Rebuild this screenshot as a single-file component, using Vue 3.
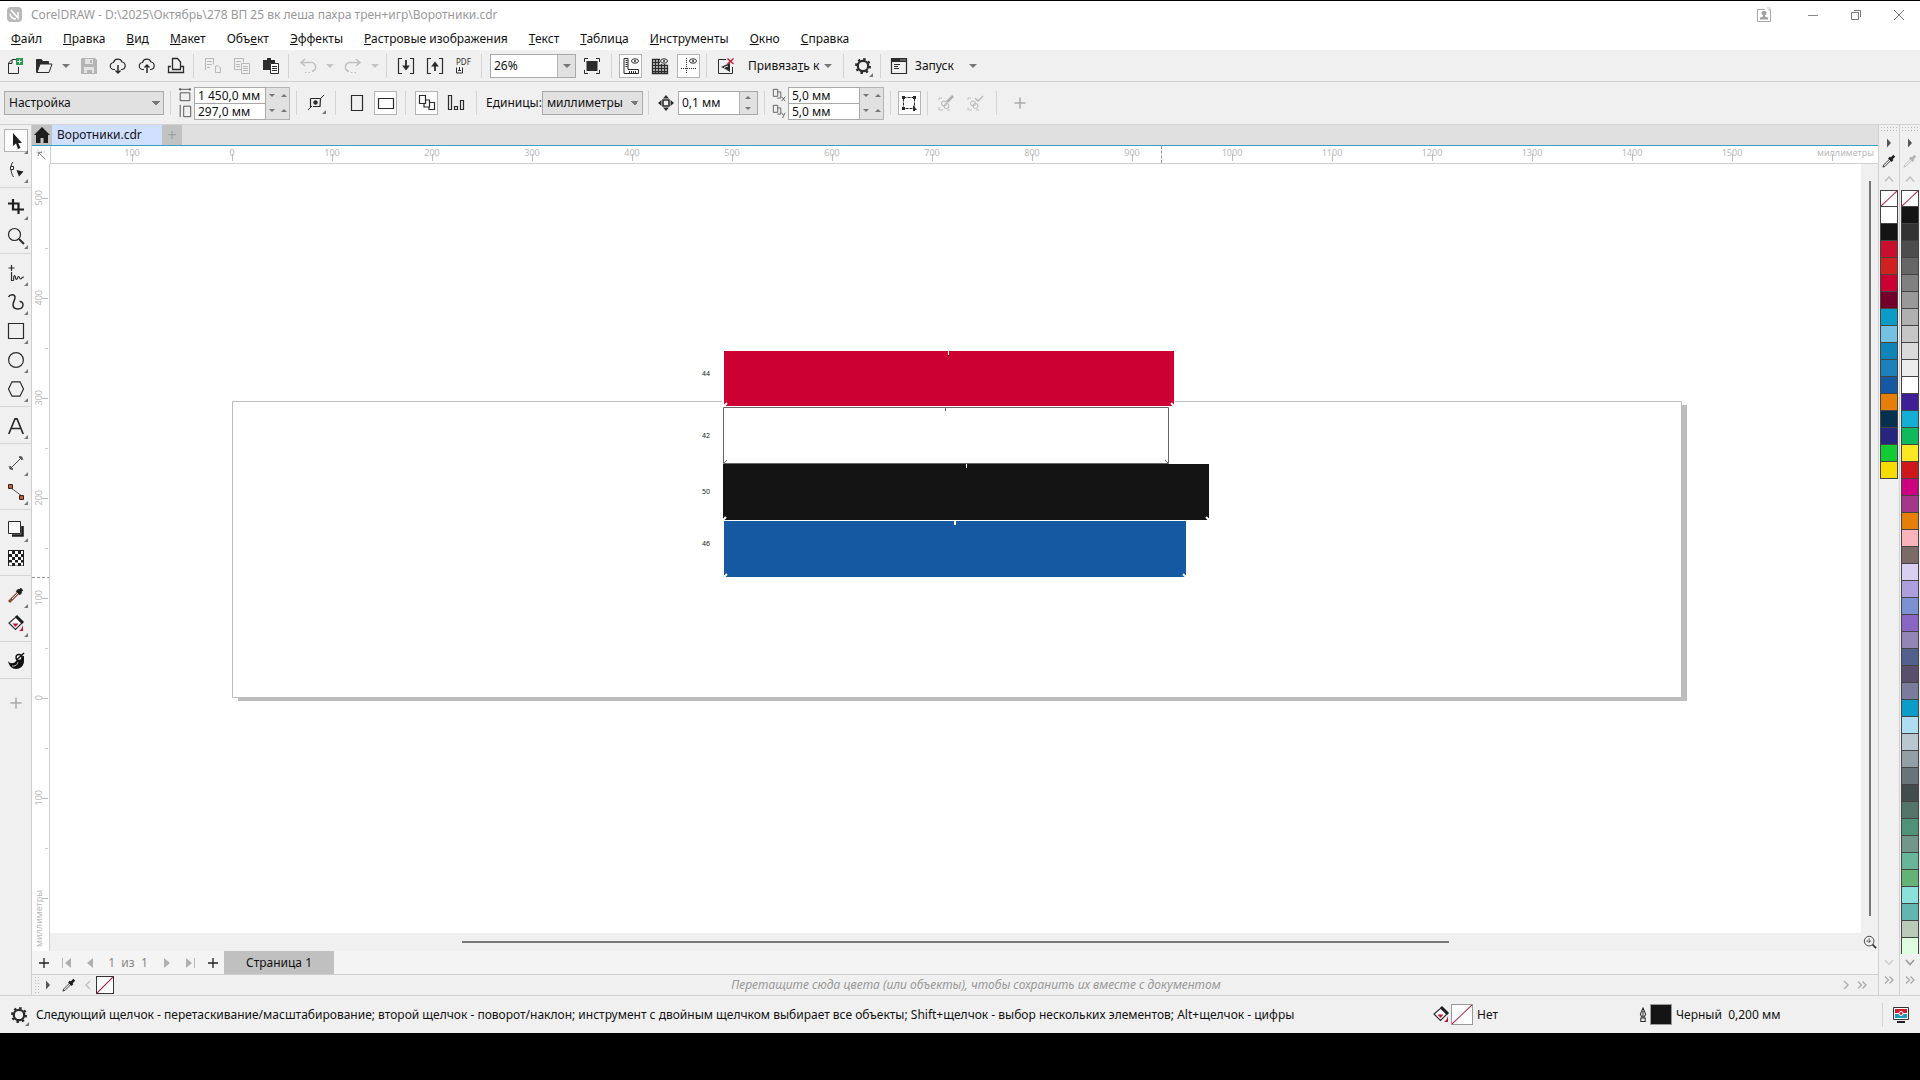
<script setup>
import { h } from 'vue'

const glyphs = {
  logo: '<rect x="0" y="0" width="15" height="15" rx="4" fill="#b9b9b9"/><path d="M4 3l7 8V5M3 7c1 4 4 5 6 5" fill="none" stroke="#fff" stroke-width="1.5"/>',
  new: '<path d="M9 1.5H5L1.5 5v10.5h10V9M5 2v3.5H1.5" stroke="#2b2b2b"/><path d="M9 0h7v7H9z" fill="#2a9a50"/><path d="M12.5 1.5v4M10.5 3.5h4" stroke="#fff"/>',
  open: '<path d="M.5 14.5V1.5h5l1 2h6V6" stroke="#2b2b2b" fill="#2b2b2b"/><path d="M1 14.5L4 6h12l-3 8.5z" fill="#f0f0f0" stroke="#2b2b2b"/>',
  save: '<path d="M1 0h13l2 2v14H0V1z" fill="#b4b4b4"/><path d="M4 1h8v5H4zM3 9h10v6H3z" fill="#e4e4e4"/><path d="M9 2h2v3H9zM6 12h5v3H6z" fill="#b4b4b4"/>',
  clouddown: '<path d="M5 11.5H4a3.5 3.5 0 0 1-.5-7A4.5 4.5 0 0 1 12 4a3.8 3.8 0 0 1 0 7.5h-1" stroke="#2b2b2b" stroke-width="1.2"/><path d="M8 7v8M5.5 12.5L8 15l2.5-2.5" stroke="#2b2b2b" stroke-width="1.5"/>',
  cloudup: '<path d="M5 11.5H4a3.5 3.5 0 0 1-.5-7A4.5 4.5 0 0 1 12 4a3.8 3.8 0 0 1 0 7.5h-1" stroke="#2b2b2b" stroke-width="1.2"/><path d="M8 15V7M5.5 9.5L8 7l2.5 2.5" stroke="#2b2b2b" stroke-width="1.5"/>',
  print: '<path d="M4.5 11V.5h5L12.5 4v7M3 8.5H.5v6h15v-6H13M4 11.5h9" stroke="#2b2b2b" stroke-width="1.3"/>',
  cut: '<path d="M.5 12V.5h8v6M2 3.5h5M2 6.5h5M2 9.5h3M10.5 8v6.5h5V10l-2-2z" stroke="#b8b8b8"/>',
  copy: '<path d="M7 11.5H.5V.5h9v4M2 3.5h5M2 6.5h4M2 8.5h4M7.5 5.5h8v10h-8zM9 8.5h5M9 10.5h5M9 12.5h5" stroke="#b8b8b8"/>',
  paste: '<path d="M0 2h4V0h4v2h4v3H7v7H0z" fill="#2b2b2b"/><path d="M7.5 5.5h8v10h-8zM9 8.5h5M9 10.5h5M9 12.5h5" stroke="#2b2b2b" fill="#fff"/>',
  undo: '<path d="M5 1L1 4.5 5 8M1 4.5h9a4.5 4.5 0 0 1 2 9" stroke="#c0c0c0" stroke-width="1.5"/><path d="M10 14.5H3" stroke="#c0c0c0" stroke-dasharray="1.5 2"/>',
  redo: '<path d="M11 1l4 3.5L11 8M15 4.5H6a4.5 4.5 0 0 0-2 9" stroke="#c0c0c0" stroke-width="1.5"/><path d="M6 14.5h7" stroke="#c0c0c0" stroke-dasharray="1.5 2"/>',
  import: '<path d="M4 .5H.5v15H4M12 .5h3.5v15H12" stroke="#2b2b2b" stroke-width="1.2"/><path d="M8 2v9M6 8.5L8 11l2-2.5z" stroke="#2b2b2b" stroke-width="1.8"/>',
  export: '<path d="M4 .5H.5v15H4M12 .5h3.5v15H12" stroke="#2b2b2b" stroke-width="1.2"/><path d="M8 13V5M6 7.5L8 5l2 2.5z" stroke="#2b2b2b" stroke-width="1.8"/>',
  pdf: '<text x="0" y="7" font-size="8" fill="#2b2b2b">PDF</text><path d="M.5 9.5V15h6V9.5M2 12.5h3M3.5 9v4" stroke="#2b2b2b"/>',
  full: '<path d="M.5 4V.5H4M12 .5h3.5V4M15.5 12v3.5H12M4 15.5H.5V12" stroke="#2b2b2b"/><path d="M2.5 3h11v10h-11z" fill="#2b2b2b"/>',
  rulers: '<path d="M1 .5h4v11h10.5v4H1zM2.5 2.5h2M2.5 4.5h2M2.5 6.5h2M2.5 8.5h2M6.5 13v2M8.5 13v2M10.5 13v2M12.5 13v2" stroke="#2b2b2b"/><ellipse cx="12" cy="3" rx="3.5" ry="2.2" stroke="#2b2b2b"/><circle cx="12" cy="3" r="1" fill="#2b2b2b"/>',
  grid: '<path d="M.5 1v14.5h15V7M3.5 1v15M6.5 1v15M9.5 6v10M12.5 6v10M0 1.5h8M0 4.5h8M0 7.5h16M0 10.5h16M0 13.5h16" stroke="#2b2b2b" stroke-width="1.3"/><ellipse cx="12" cy="3" rx="3.5" ry="2.2" stroke="#2b2b2b"/><circle cx="12" cy="3" r="1" fill="#2b2b2b"/>',
  guides: '<path d="M5.5 0v16M0 10.5h16" stroke="#2b2b2b" stroke-dasharray="1 1"/><ellipse cx="12" cy="3" rx="3.5" ry="2.2" stroke="#2b2b2b"/><circle cx="12" cy="3" r="1" fill="#2b2b2b"/>',
  snapoff: '<path d="M8 1.5H.5v14h14V9" stroke="#2b2b2b"/><path d="M12 5L3 9l3.5 1.5L12 14z" fill="#2b2b2b"/><path d="M6 9.5L10 8" stroke="#eee"/><path d="M9.5.5l6 5.5M15.5.5l-6 5.5" stroke="#c8102e" stroke-width="1.3"/>',
  gear: '<circle cx="8" cy="8" r="5.2" stroke="#2b2b2b" stroke-width="2.2"/><circle cx="8" cy="8" r="7" stroke="#2b2b2b" stroke-width="2" stroke-dasharray="2.5 3"/>',
  launch: '<path d="M.5.5h15v15H.5z" stroke="#2b2b2b" stroke-width="1.2"/><path d="M0 0h16v4H0z" fill="#2b2b2b"/><path d="M9.5 2h1M11.5 2h1M13.5 2h1" stroke="#fff"/><path d="M3 6.5h6M3 8.5h4M3 10.5h5" stroke="#2b2b2b"/>',
  node: '<path d="M2.5 3.5V12M2.5 3.5h10l-.5 8H5" stroke="#2b2b2b" stroke-width="1.2"/><path d="M0 15l4-4M12 4l4-4" stroke="#2b2b2b"/><circle cx="7.5" cy="7.5" r="2.2" fill="#2b2b2b"/>',
  portrait: '<path d="M2.5.5h11v15h-11z" stroke="#2b2b2b" stroke-width="1.2"/>',
  landscape: '<path d="M.5 3.5h15v10H.5z" stroke="#2b2b2b" stroke-width="1.2"/>',
  pages: '<path d="M.5.5h6v8h-6zM5 9v3h5.5V5H7M10 12.5v2h5.5v-7H11" stroke="#2b2b2b" stroke-width="1.2"/>',
  bars: '<path d="M.5.5h3v14h-3zM6.5 11.5h3v3h-3zM12.5 5.5h3v9h-3z" stroke="#2b2b2b" stroke-width="1.2"/>',
  nudge: '<path d="M8 0l3 3.5H5zM8 16l3-3.5H5zM0 8l3.5-3v6zM16 8l-3.5-3v6z" fill="#2b2b2b"/><path d="M5 5h6v6H5z" stroke="#2b2b2b" stroke-width="1.6"/>',
  bound: '<path d="M2.5 2.5h11v11h-11z" stroke="#2b2b2b" stroke-dasharray="3 1"/><path d="M1 1h3v3H1zM12 1h3v3h-3zM1 12h3v3H1zM12 10l4 5h-2v1h-2z" fill="#2b2b2b"/>',
  editoff: '<path d="M1 5V3h3M1 12v3h4M9 15h3" stroke="#bdbdbd"/><circle cx="6" cy="8.5" r="2.5" stroke="#b4b4b4"/><circle cx="8.5" cy="11" r="2.5" stroke="#b4b4b4"/><path d="M9 7l6-6" stroke="#adadad" stroke-width="2.5"/>',
  editdone: '<path d="M1 5V3h3M1 12v3h4M9 15h3" stroke="#c4c4c4"/><circle cx="6" cy="8.5" r="2.5" stroke="#b8b8b8"/><circle cx="8.5" cy="11" r="2.5" stroke="#b8b8b8"/><path d="M8 3l3 3 5-5" stroke="#bdbdbd" stroke-width="1.6"/>',
  plus: '<path d="M8 2.5v11M2.5 8h11" stroke="#a9a9a9" stroke-width="1.5"/>',
  home: '<path d="M8 0l8 8h-2v8H9.5v-5h-3v5H2V8H0z" fill="#1e1e1e"/>',
  pick: '<path d="M5 0v13l3-2.5L10 16l2.5-1-2.3-5H14z" fill="#1e1e1e"/>',
  shape: '<path d="M5 0C2 3 2.5 11 5.5 15" stroke="#2b2b2b"/><path d="M2.5 4.5h3v3h-3z" fill="#fff" stroke="#2b2b2b"/><path d="M8.5 8l7 1.5-4.5 5z" fill="#1e1e1e"/>',
  crop: '<path d="M5 0v10.5h5M0 4.5h4M6 4.5h4.5V15M10 10.5h6" stroke="#1e1e1e" stroke-width="2.2"/>',
  zoom: '<circle cx="6.5" cy="6.5" r="6" stroke="#2b2b2b" stroke-width="1.2"/><path d="M11 11l5 5" stroke="#2b2b2b" stroke-width="2"/>',
  free: '<path d="M3.5 0v6M.5 3h6M3.5 7v8.5H5c1.5 0 0-5 1.5-5s.5 4 2 4 .5-3 2-3 .5 2.5 2 2.5 1-2 3.5-2" stroke="#2b2b2b" stroke-width="1.2"/>',
  curve: '<path d="M.5 3C2 0 7 0 7 3.5 7 6 5 8 5 11c0 5 9.5 5.5 10 0 0-2.5-2-4-3.5-3.5" stroke="#2b2b2b" stroke-width="1.5"/>',
  rect: '<path d="M.5.5h15v15H.5z" stroke="#2b2b2b" stroke-width="1.2"/>',
  ellipse: '<circle cx="8" cy="8" r="7.4" stroke="#2b2b2b" stroke-width="1.2"/>',
  poly: '<path d="M4 .8h8L15.5 8 12 15.2H4L.5 8z" stroke="#2b2b2b" stroke-width="1.2"/>',
  text: '<path d="M.8 16L7 .8h2L15.2 16M3.3 10.5h9.4" stroke="#2b2b2b" stroke-width="1.7"/>',
  dim: '<path d="M2 14L14 2M1 11.5L4.5 15M11.5 1L15 4.5M2 11v3h3zM14 5V2h-3z" stroke="#444"/>',
  conn: '<path d="M3 4l11 8" stroke="#555"/><path d="M.5.5h4v4h-4zM11.5 11.5h4v4h-4z" fill="#c2582c" stroke="#3a2a22"/>',
  shadow: '<path d="M14.5 5v9.5H4" stroke="#1e1e1e" stroke-width="2.6"/><path d="M.5.5h12v12H.5z" fill="#fafafa" stroke="#2b2b2b"/>',
  check: '<path d="M0 0h16v16H0z" fill="#1e1e1e"/><path d="M1 2.5h14M1 8.5h14M1 14h14" stroke="#fff" stroke-width="3" stroke-dasharray="3 3"/><path d="M4 5.5h11M4 11.5h11" stroke="#fff" stroke-width="3" stroke-dasharray="3 3"/>',
  drop: '<path d="M1 15l9-9" stroke="#8a4a34" stroke-width="3"/><path d="M4 12l6-6" stroke="#eee"/><path d="M9 3l4 4M11 5l3-3" stroke="#1e1e1e" stroke-width="3.5"/>',
  fill: '<path d="M8 1l6 6-6.5 6.5L1 7z" stroke="#2b2b2b" fill="#fff" stroke-width="1.2"/><path d="M8 0l7 7" stroke="#1e1e1e" stroke-width="3"/><path d="M4.5 7.5h6L7.5 11z" fill="#c8102e"/><path d="M15 9v6h-4c2-1 3-3 4-6z" fill="#c8102e"/>',
  brush: '<path d="M0 8c2 3 6 3 8 0 2-2 4-5 8-5v5c0 5-4 8-8 8s-7-3-8-8z" fill="#111"/><circle cx="11" cy="4.5" r="3" fill="#fff" stroke="#111" stroke-width="1.4"/><path d="M9 6.5L16 0" stroke="#111" stroke-width="1.5"/><path d="M4 13c5 1 6-4 6-4" stroke="#eee" stroke-width=".8"/>',
  pen: '<path d="M8 0l3 7-1.5 3h-3L5 7zM8 3v6M5.5 11.5h5v4h-5z" stroke="#2b2b2b" stroke-width="1.2"/>',
  dark: '<path d="M1 15l1-2.5 7-7 1.5 1.5-7 7z" fill="#eee" stroke="#2b2b2b"/><path d="M8 4l4 4M10.5 5.5L14 2" stroke="#1e1e1e" stroke-width="3"/>',
  light: '<path d="M1 15l1-2.5 7-7 1.5 1.5-7 7z" fill="#eee" stroke="#bbb"/><path d="M8 4l4 4M10.5 5.5L14 2" stroke="#b4b4b4" stroke-width="3"/>',
  user: '<path d="M13 2.5h1.5v12H1.5v-12H9" stroke="#a9a9a9"/><path d="M8 4a2 2 0 0 1 1 4l.5 2 2.5.5v2H4v-2l2.5-.5L7 8a2 2 0 0 1 1-4z" fill="#a0a0a0"/><path d="M11 1h4M12 3h3" stroke="#c9c9c9"/>',
  min: '<path d="M3 8.5h10" stroke="#8a8a8a"/>',
  max: '<path d="M3.5 5.5h7v7h-7zM6 3.5h6.5V10" stroke="#777"/>',
  close: '<path d="M3 3l10 10M13 3L3 13" stroke="#777"/>',
  pagew: '<path d="M2.5 5.5h11v9h-11zM1 1.5h14M2.5 0v3M13.5 0v3" stroke="#444"/>',
  pageh: '<path d="M6.5 2.5h8v12h-8zM2.5 1v14" stroke="#444"/>',
  dupx: '<path d="M1.5 1.5h5v8h-5zM6 4.5h4v7H6" stroke="#555"/><path d="M11 10l4 5M15 10l-4 5" stroke="#555"/>',
  dupy: '<path d="M1.5 1.5h5v8h-5zM6 4.5h4v7H6" stroke="#555"/><path d="M11 10l2 3M15 10l-3 6" stroke="#555"/>',
  origin: '<path d="M4.5 2v12M2 4.5h12" stroke="#999" stroke-dasharray="1 2"/><path d="M5 5l8 8M5 9V5h4" stroke="#777"/>',
  nav: '<circle cx="7" cy="7" r="5.5" stroke="#333"/><path d="M7 4v6M4 7h6" stroke="#555" stroke-width="1.2" stroke-dasharray="2 1"/><path d="M11 11l4 4" stroke="#333" stroke-width="2"/>',
  monitor: '<path d="M.5.5h15v12H.5z" fill="#fff" stroke="#333"/><path d="M2 2h12v4H2z" fill="#d0202e"/><path d="M2 7h12v4H2z" fill="#1d9cc0"/><circle cx="8" cy="6.5" r="2" stroke="#fff" fill="#d0202e"/><path d="M4 15h8" stroke="#222" stroke-width="2"/>',
  first: '<path d="M3.5 3v10" stroke="#b8b8b8"/><path d="M12 3v10L6 8z" fill="#b0b0b0"/>',
  prev: '<path d="M11 3v10L5 8z" fill="#b0b0b0"/>',
  next: '<path d="M5 3v10l6-5z" fill="#b0b0b0"/>',
  last: '<path d="M12.5 3v10" stroke="#b8b8b8"/><path d="M4 3v10l6-5z" fill="#b0b0b0"/>',
  add: '<path d="M8 3v10M3 8h10" stroke="#222" stroke-width="1.3"/>',
  fly: '<path d="M6 3.5v9l4-4.5z" fill="#555"/>',
  up: '<path d="M4 10.5L8 6l4 4.5" stroke="#c2c2c2" stroke-width="1.6"/>',
  down: '<path d="M4 6l4 4.5L12 6" stroke="#d0d0d0" stroke-width="1.6"/>',
  downdark: '<path d="M4 6l4 4.5L12 6" stroke="#999" stroke-width="1.6"/>',
  left: '<path d="M10 4L6 8l4 4" stroke="#c4c4c4" stroke-width="1.6"/>',
  right: '<path d="M6 4l4 4-4 4" stroke="#b4b4b4" stroke-width="1.6"/>',
  more: '<path d="M4 4.5L7.5 8 4 11.5M8.5 4.5L12 8l-3.5 3.5" stroke="#a9a9a9" stroke-width="1.3"/>',
}
const Icon = (props) => h('svg', { class: 'icon', width: props.size || 16, height: props.size || 16, viewBox: '0 0 16 16', fill: 'none', 'aria-hidden': 'true', innerHTML: glyphs[props.name] })
Icon.props = ['name', 'size']

const menus = [
  ['', 'Ф', 'айл'], ['', 'П', 'равка'], ['', 'В', 'ид'], ['', 'М', 'акет'], ['Объ', 'е', 'кт'], ['', 'Э', 'ффекты'],
  ['', 'Р', 'астровые изображения'], ['', 'Т', 'екст'], ['', 'Т', 'аблица'], ['', 'И', 'нструменты'], ['', 'О', 'кно'], ['', 'С', 'правка'],
]
const toolGroups = [
  [['pick', 'Указатель'], ['shape', 'Форма']],
  [['crop', 'Обрезка'], ['zoom', 'Масштаб']],
  [['free', 'Свободная форма'], ['curve', 'Кривая'], ['rect', 'Прямоугольник'], ['ellipse', 'Эллипс'], ['poly', 'Многоугольник']],
  [['text', 'Текст']],
  [['dim', 'Размер'], ['conn', 'Соединитель']],
  [['shadow', 'Тень'], ['check', 'Прозрачность', true]],
  [['drop', 'Пипетка'], ['fill', 'Заливка']],
  [['brush', 'Кисть', true]],
]
const hTicks = [100, 0, 100, 200, 300, 400, 500, 600, 700, 800, 900, 1000, 1100, 1200, 1300, 1400, 1500, '']
const vTicks = [500, 400, 300, 200, 100, 0, 100, '']
const docColors = ['#ffffff', '#141414', '#c8102e', '#d0211f', '#cc0033', '#74002a', '#0b9cc8', '#74c1e4', '#0e84b8', '#1c80bb', '#1559a3', '#e67e0a', '#05304f', '#26267f', '#12cb34', '#f8dc00']
const palette = ['#141414', '#333333', '#4d4d4d', '#666666', '#808080', '#999999', '#b0b0b0', '#c6c6c6', '#dadada', '#ececec', '#ffffff', '#3f1f96', '#14aed4', '#10b95c', '#fbe823', '#cd1719', '#cd007f', '#a3388a', '#e67e0a', '#fab3bb', '#7b6a66', '#d9cff0', '#ad9fdc', '#7d90d2', '#8966c4', '#9386b4', '#525f8a', '#594f6c', '#7b7b9c', '#0b9cc8', '#aedcf0', '#b9c8d0', '#929fa4', '#67747a', '#434c4c', '#54746a', '#4f9277', '#72978a', '#68b59a', '#65b277', '#8be0dc', '#63b5b2', '#b9cab9', '#defde0']
</script>

<template>
  <div class="app">
    <header class="title">
      <Icon name="logo" /><span class="caption">CorelDRAW - D:\2025\Октябрь\278 ВП 25 вк леша пахра трен+игр\Воротники.cdr</span>
      <button class="win account" aria-label="Учетная запись"><Icon name="user" /></button>
      <button class="win" aria-label="Свернуть"><Icon name="min" /></button>
      <button class="win" aria-label="Развернуть"><Icon name="max" /></button>
      <button class="win" aria-label="Закрыть"><Icon name="close" /></button>
    </header>
    <nav class="menu"><button v-for="m in menus" :key="m[1] + m[2]">{{ m[0] }}<u>{{ m[1] }}</u>{{ m[2] }}</button></nav>

    <div class="bar tools">
      <button class="btn" aria-label="Создать"><Icon name="new" /></button>
      <button class="btn" aria-label="Открыть"><Icon name="open" /></button>
      <button class="caret" aria-label="Последние"></button>
      <button class="btn" aria-label="Сохранить"><Icon name="save" /></button>
      <button class="btn" aria-label="Из облака"><Icon name="clouddown" /></button>
      <button class="btn" aria-label="В облако"><Icon name="cloudup" /></button>
      <button class="btn" aria-label="Печать"><Icon name="print" /></button>
      <i class="sep"></i>
      <button class="btn" aria-label="Вырезать"><Icon name="cut" /></button>
      <button class="btn" aria-label="Копировать"><Icon name="copy" /></button>
      <button class="btn" aria-label="Вставить"><Icon name="paste" /></button>
      <i class="sep"></i>
      <button class="btn" aria-label="Отменить"><Icon name="undo" /></button>
      <button class="caret dim" aria-label="Список отмен"></button>
      <button class="btn" aria-label="Вернуть"><Icon name="redo" /></button>
      <button class="caret dim" aria-label="Список возвратов"></button>
      <i class="sep"></i>
      <button class="btn" aria-label="Импорт"><Icon name="import" /></button>
      <button class="btn" aria-label="Экспорт"><Icon name="export" /></button>
      <button class="btn" aria-label="Опубликовать в PDF"><Icon name="pdf" /></button>
      <i class="sep"></i>
      <div class="combo"><input aria-label="Масштаб" value="26%"><button class="drop" aria-label="Уровни масштаба"><b class="tri"></b></button></div>
      <button class="btn wide" aria-label="Полный экран"><Icon name="full" /></button>
      <i class="sep"></i>
      <button class="btn on" aria-label="Линейки"><Icon name="rulers" /></button>
      <button class="btn" aria-label="Сетка"><Icon name="grid" /></button>
      <button class="btn on" aria-label="Направляющие"><Icon name="guides" /></button>
      <i class="sep"></i>
      <button class="btn" aria-label="Отключить привязку"><Icon name="snapoff" /></button>
      <button class="label snap"><span>Привяза<u>т</u>ь к</span><b class="tri"></b></button>
      <i class="sep"></i>
      <button class="btn corner" aria-label="Параметры"><Icon name="gear" /></button>
      <i class="sep"></i>
      <button class="label run"><Icon name="launch" /><span>Запуск</span><b class="tri"></b></button>
    </div>

    <div class="bar props">
      <select class="preset" aria-label="Размер страницы"><option>Настройка</option></select>
      <i class="sep"></i>
      <div class="pair">
        <div class="marks"><Icon name="pagew" size="14" /><Icon name="pageh" size="14" /></div>
        <div class="fields"><input aria-label="Ширина" value="1 450,0 мм"><input aria-label="Высота" value="297,0 мм"></div>
        <div class="spins"><b class="tri"></b><b class="tri up"></b><b class="tri"></b><b class="tri up"></b></div>
      </div>
      <i class="sep"></i>
      <button class="btn corner" aria-label="Начало координат"><Icon name="node" /></button>
      <i class="sep mid"></i>
      <button class="btn" aria-label="Книжная"><Icon name="portrait" /></button>
      <button class="btn on" aria-label="Альбомная"><Icon name="landscape" /></button>
      <i class="sep mid"></i>
      <button class="btn on" aria-label="Все страницы"><Icon name="pages" /></button>
      <button class="btn" aria-label="Текущая страница"><Icon name="bars" /></button>
      <i class="sep roomy"></i>
      <label class="units" for="units">Единицы:</label>
      <select id="units" class="unitsel"><option>миллиметры</option></select>
      <i class="sep"></i>
      <Icon name="nudge" class="nudge" />
      <div class="combo step"><input aria-label="Шаг" value="0,1 мм"><div class="drop col"><b class="tri up"></b><b class="tri"></b></div></div>
      <i class="sep"></i>
      <div class="pair">
        <div class="marks"><Icon name="dupx" size="14" /><Icon name="dupy" size="14" /></div>
        <div class="fields"><input aria-label="Дублирование X" value="5,0 мм"><input aria-label="Дублирование Y" value="5,0 мм"></div>
        <div class="spins"><b class="tri"></b><b class="tri up"></b><b class="tri"></b><b class="tri up"></b></div>
      </div>
      <i class="sep"></i>
      <button class="btn on" aria-label="Габариты"><Icon name="bound" /></button>
      <i class="sep"></i>
      <button class="btn" aria-label="Изменить"><Icon name="editoff" /></button>
      <button class="btn" aria-label="Завершить"><Icon name="editdone" /></button>
      <i class="sep roomy"></i>
      <button class="btn wide" aria-label="Настроить панель"><Icon name="plus" /></button>
    </div>

    <div class="body">
      <aside class="toolbox">
        <div v-for="(g, i) in toolGroups" :key="i" class="group">
          <button v-for="t in g" :key="t[0]" class="tool" :class="{ corner: !t[2], on: t[0] === 'pick' }" :aria-label="t[1]"><Icon :name="t[0]" /></button>
        </div>
        <button class="tool extra" aria-label="Настроить инструменты"><Icon name="plus" /></button>
      </aside>

      <main class="center">
        <div class="tabs">
          <button class="home" aria-label="Начальный экран"><Icon name="home" /></button>
          <button class="tab">Воротники.cdr</button>
          <button class="newtab" aria-label="Новая вкладка">+</button>
        </div>
        <div class="work">
          <div class="origin"><Icon name="origin" size="14" /></div>
          <div class="hruler"><div v-for="(t, i) in hTicks" :key="i" class="ht">{{ t }}</div><span class="hunit">миллиметры</span><i class="cursor"></i></div>
          <div class="vruler"><div v-for="(t, i) in vTicks" :key="i" class="vt"><span>{{ t }}</span></div><span class="vunit">миллиметры</span><i class="cursor"></i></div>
          <div class="canvas">
            <svg width="100%" height="100%" fill="none" role="img" aria-label="Рабочая область">
              <path d="M1631 241h6v296H188v-3h1443z" fill="#bdbdbd" />
              <path d="M182.5 237.5h1449v296h-1449z" fill="#fff" stroke="#bdbdbd" />
              <g>
                <path d="M673.5 243.5h445v56h-445z" fill="#fff" stroke="#666" />
                <path d="M895.5 243v4M674 299l3-3M1118 299l-3-3" stroke="#666" />
                <path d="M672 186h453v57H672z" fill="#fff" />
                <path d="M674 187h450v55H674z" fill="#cc0033" />
                <path d="M898.5 187v4" stroke="#fff" />
                <path d="M674 242l3-3M1124 242l-3-3" stroke="#fff" stroke-width="2" />
                <path d="M673 300h486v56H673z" fill="#141414" />
                <path d="M916.5 300v4" stroke="#fff" />
                <path d="M673 356l3-3M1159 356l-3-3" stroke="#fff" stroke-width="2" />
                <path d="M673 356h463v1H673z" fill="#fff" />
                <path d="M674 357h462v56H674z" fill="#1459a2" />
                <path d="M905 357v4M674 413l3-3M1136 413l-3-3" stroke="#fff" stroke-width="2" />
              </g>
              <g fill="#222" font-size="7"><text x="652" y="212">44</text><text x="652" y="274">42</text><text x="652" y="330">50</text><text x="652" y="382">46</text></g>
            </svg>
          </div>
          <div class="vscroll"><i></i></div>
          <div class="hscroll"><i></i></div>
          <button class="nav" aria-label="Навигатор"><Icon name="nav" size="14" /></button>
        </div>
        <div class="pages">
          <button class="pb" aria-label="Добавить страницу в начало"><Icon name="add" /></button>
          <button class="pb" aria-label="Первая"><Icon name="first" /></button>
          <button class="pb" aria-label="Предыдущая"><Icon name="prev" /></button>
          <span class="count">1&nbsp; из &nbsp;1</span>
          <button class="pb" aria-label="Следующая"><Icon name="next" /></button>
          <button class="pb" aria-label="Последняя"><Icon name="last" /></button>
          <button class="pb" aria-label="Добавить страницу"><Icon name="add" /></button>
          <button class="page">Страница 1</button>
        </div>
        <div class="dock">
          <i class="grip"></i>
          <Icon name="fly" /><Icon name="dark" size="14" class="dk" /><Icon name="left" />
          <button class="none" aria-label="Нет цвета"></button>
          <span class="hint">Перетащите сюда цвета (или объекты), чтобы сохранить их вместе с документом</span>
          <Icon name="right" /><Icon name="more" />
        </div>
      </main>

      <aside class="pal">
        <i class="dots"></i><Icon name="fly" class="pi" /><Icon name="dark" size="14" class="pi" /><Icon name="up" class="pi" />
        <div class="swatches"><button class="sw none" aria-label="Нет цвета"></button><button v-for="c in docColors" :key="c" class="sw" :style="{ background: c }" :aria-label="c"></button></div>
        <Icon name="down" class="pe" /><Icon name="more" class="pe" />
      </aside>
      <aside class="pal">
        <i class="dots"></i><Icon name="fly" class="pi" /><Icon name="light" size="14" class="pi" /><Icon name="up" class="pi" />
        <div class="swatches"><button class="sw none" aria-label="Нет цвета"></button><button v-for="(c, i) in palette" :key="i" class="sw" :style="{ background: c }" :aria-label="c"></button></div>
        <Icon name="downdark" class="pe" /><Icon name="more" class="pe" />
      </aside>
    </div>

    <footer class="status">
      <button class="btn corner" aria-label="Параметры строки состояния"><Icon name="gear" /></button>
      <span class="help">Следующий щелчок - перетаскивание/масштабирование; второй щелчок - поворот/наклон; инструмент с двойным щелчком выбирает все объекты; Shift+щелчок - выбор нескольких элементов; Alt+щелчок - цифры</span>
      <div class="stat fillstat"><Icon name="fill" /><i class="chip none"></i><span>Нет</span></div>
      <div class="stat penstat"><Icon name="pen" size="14" /><i class="chip black"></i><span>Черный&nbsp; 0,200 мм</span></div>
      <div class="proof"><Icon name="monitor" /></div>
    </footer>
  </div>
</template>

<style>
body { margin: 0; background: #000; }
</style>

<style scoped>
* { box-sizing: border-box; }
.app { height: 100vh; display: flex; flex-direction: column; padding: 1px 0 47px; background: #000; color: #111; font: 12px/16px 'Noto Sans', 'Open Sans', sans-serif; overflow: hidden; }
button, input, select { font: inherit; color: inherit; border: 0; padding: 0; margin: 0; background: none; border-radius: 0; }
button { display: flex; align-items: center; justify-content: center; flex: none; white-space: pre; }
.icon { display: block; flex: none; overflow: visible; }
.title { display: flex; align-items: center; height: 27px; padding-left: 7px; background: #fff; color: #999; }
.caption { flex: 1; margin-left: 8px; }
.win { width: 43px; height: 27px; }
.account { margin-right: 6px; }
.menu { display: flex; height: 22px; background: #fff; }
.menu button { display: block; padding: 0 10px 0 11px; }
.bar { display: flex; align-items: center; background: #f0f0f0; border-bottom: 1px solid #d2d2d2; flex: none; }
.tools { height: 32px; }
.props { height: 43px; }
.btn { position: relative; width: 29px; height: 24px; }
.wide { width: 32px; }
.btn.on::before, .tool.on::before { content: ''; position: absolute; inset: 0 3px; border: 1px solid #b4b4b4; background: #fdfdfd; }
.on .icon { position: relative; }
.corner::after { content: ''; position: absolute; right: 4px; bottom: 1px; border: 2px solid; border-color: transparent #777 #777 transparent; }
.sep { flex: none; width: 1px; height: 24px; margin: 0 4px 0 3px; background: #d4d4d4; }
.sep.mid { margin: 0 6px 0 5px; }
.sep.roomy { margin: 0 7px 0 6px; }
.tri { display: inline-block; flex: none; border: 4px solid transparent; border-top-color: #777; border-bottom-width: 0; }
.tri.up { border-top-width: 0; border-bottom: 4px solid #777; }
.caret { width: 16px; height: 24px; }
.caret::before { content: ''; border: 4px solid transparent; border-top-color: #777; border-bottom-width: 0; }
.caret.dim::before { border-top-color: #c4c4c4; }
.combo { display: flex; height: 24px; width: 86px; margin-left: 4px; border: 1px solid #a9a9a9; background: #fff; flex: none; }
.combo input { width: 0; flex: 1; padding-left: 3px; }
.drop { width: 18px; background: #e1e1e1; border-left: 1px solid #b4b4b4; }
.drop.col { display: flex; flex-direction: column; align-items: center; justify-content: space-around; }
.col .tri, .spins .tri { border-left-width: 3px; border-right-width: 3px; }
.col .tri:not(.up), .spins .tri:not(.up) { border-top-width: 3px; }
.col .up, .spins .up { border-bottom-width: 3px; }
.label { height: 24px; }
.snap { width: 100px; justify-content: space-between; padding: 0 8px; }
.run { width: 98px; padding: 0 6px; gap: 8px; }
.run .tri { margin-left: auto; }
.preset, .unitsel { appearance: none; height: 24px; border: 1px solid #a9a9a9; padding: 0 4px; background: linear-gradient(to top right, transparent 50%, #777 50%) no-repeat right 7px center / 4px 4px, linear-gradient(to top left, transparent 50%, #777 50%) no-repeat right 3px center / 4px 4px, #e1e1e1; }
.preset { width: 160px; margin: 0 3px 0 4px; }
.pair { display: flex; flex: none; margin: 0 3px; }
.marks { display: flex; flex-direction: column; gap: 2px; padding: 1px 2px 0 0; }
.fields { width: 72px; border: 1px solid #a9a9a9; background: #fff; }
.fields input { display: block; width: 100%; height: 15px; padding-left: 3px; line-height: 15px; }
.fields input + input { height: 16px; border-top: 1px solid #a9a9a9; }
.spins { display: grid; grid-template: 1fr 1fr / 12px 12px; place-items: center; width: 24px; border: 1px solid #b4b4b4; border-left: 0; background: #e1e1e1; }
.units { margin-left: 2px; }
.unitsel { width: 101px; margin-right: 2px; }
.nudge { margin-left: 5px; }
.step { width: 80px; margin-right: 3px; }
.body { flex: 1; min-height: 0; display: flex; background: #f0f0f0; border-bottom: 1px solid #d2d2d2; }
.toolbox { width: 32px; border-right: 1px solid #cfcfcf; padding-top: 1px; flex: none; }
.group { padding-bottom: 3px; margin-bottom: 4px; border-bottom: 1px solid #d6d6d6; }
.tool { position: relative; width: 32px; height: 29px; }
.tool.on::before { inset: 3px 4px; }
.extra { height: 40px; }
.center { flex: 1; min-width: 0; display: flex; flex-direction: column; }
.tabs { display: flex; height: 21px; background: #e0e0e0; border-bottom: 1px solid #35a0c4; flex: none; }
.home { width: 20px; background: #c2c2c2; }
.tab { width: 110px; background: #cfdfff; justify-content: flex-start; padding-left: 5px; }
.newtab { width: 20px; background: #c2c2c2; color: #a0a0a0; font-size: 16px; }
.work { flex: 1; min-height: 0; display: grid; grid-template: 18px 1fr 18px / 18px 1fr 17px; }
.origin { display: flex; background: #fff; padding: 2px; }
.hruler, .vruler { position: relative; overflow: hidden; background: #fff; color: #b8b8b8; font-size: 9px; line-height: 13px; }
.hruler { grid-column: 2 / 4; display: flex; padding-left: 31px; border-bottom: 1px solid #cfcfcf; border-left: 1px solid #cfcfcf; }
.ht { position: relative; flex: none; width: 100px; text-align: center; }
.ht::after { content: ''; position: absolute; left: 50px; top: 8px; height: 7px; border-left: 1px solid #bbb; }
.hunit { position: absolute; right: 4px; top: 0; }
.hruler .cursor { position: absolute; left: 1110px; top: 0; height: 17px; border-left: 1px dashed #999; }
.vruler { grid-row: 2 / 4; border-right: 1px solid #cfcfcf; }
.vt { position: relative; display: flex; align-items: center; height: 100px; top: -16px; width: 13px; }
.vt span, .vunit { writing-mode: vertical-rl; transform: rotate(180deg); }
.vt::after { content: ''; position: absolute; left: 10px; top: 50px; width: 6px; border-top: 1px solid #bbb; }
.vt::before { content: ''; position: absolute; left: 13px; top: 0; width: 3px; border-top: 1px solid #ccc; }
.vunit { position: absolute; left: 0; bottom: 4px; }
.vruler .cursor { position: absolute; left: 0; top: 413px; width: 18px; border-top: 1px dashed #999; }
.canvas { background: #fff; min-width: 0; overflow: hidden; }
.canvas svg { display: block; }
.vscroll { padding: 17px 0 17px 8px; }
.vscroll i { display: block; width: 2px; height: 100%; background: #777; }
.hscroll { padding: 8px 412px 0; }
.hscroll i { display: block; height: 2px; background: #777; }
.nav { align-self: center; }
.pages { display: flex; align-items: center; height: 24px; flex: none; background: #f4f4f4; border-bottom: 1px solid #cfcfcf; }
.pb { width: 23px; height: 23px; }
.count { width: 54px; text-align: center; color: #888; }
.page { width: 110px; height: 23px; background: #c0c0c0; }
.dock { display: flex; align-items: center; height: 20px; flex: none; padding: 0 8px 0 2px; }
.grip { width: 6px; height: 18px; background: radial-gradient(#bbb 1px, transparent 1px) 0 0 / 3px 3px; }
.dk { margin: 0 4px 0 6px; }
.none { background: linear-gradient(to bottom right, #fff calc(50% - 1px), #b02040 50%, #fff calc(50% + 1px)); }
.dock .none { width: 18px; height: 18px; border: 1px solid #333; }
.hint { flex: 1; text-align: center; font-style: italic; color: #999; }
.pal { width: 21px; flex: none; display: flex; flex-direction: column; border-left: 1px solid #d0d0d0; padding: 1px 0 5px; }
.dots { height: 6px; margin: 0 1px 3px; background: radial-gradient(#bbb 1px, transparent 1px) 0 0 / 3px 3px; }
.pi { margin: 0 auto 3px; }
.swatches { flex: 1; min-height: 0; overflow: hidden; padding-left: 1px; }
.sw { width: 18px; height: 17px; border: 1px solid #444; border-top-width: 0; }
.sw:first-child { border-top-width: 1px; }
.pe { margin: 0 auto 2px; }
.status { display: flex; align-items: center; height: 37px; flex: none; background: #f0f0f0; padding-left: 4px; }
.help { flex: 1; white-space: nowrap; margin-left: 3px; }
.stat { display: flex; align-items: center; flex: none; }
.fillstat { width: 203px; }
.penstat { width: 246px; }
.chip { width: 22px; height: 21px; margin: 0 4px 0 2px; border: 1px solid #999; }
.chip.black { margin-left: 0; background: #141414; }
.proof { width: 38px; height: 24px; padding: 4px 10px; border-left: 1px solid #d4d4d4; }
</style>
